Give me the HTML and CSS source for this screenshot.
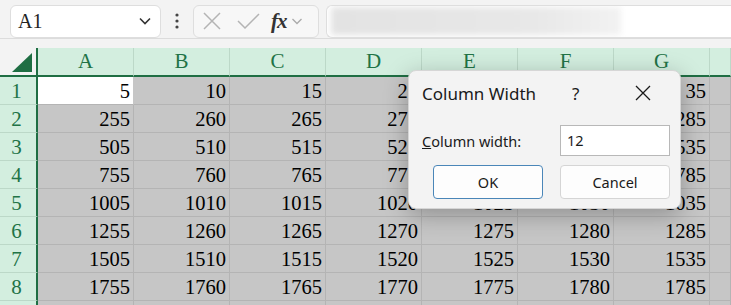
FILE: index.html
```html
<!DOCTYPE html>
<html>
<head>
<meta charset="utf-8">
<link rel="stylesheet" href="styles.css">
</head>
<body>
<div class="toolbar">
  <div class="namebox">
    <span class="nb-text">A1</span>
    <svg class="nb-chev" width="14" height="10" viewBox="0 0 14 10"><path d="M2 2.5 L7 7.5 L12 2.5" fill="none" stroke="#333" stroke-width="1.6"/></svg>
  </div>
  <div class="dots">
    <svg width="6" height="18" viewBox="0 0 6 18"><circle cx="3" cy="3" r="1.6" fill="#444"/><circle cx="3" cy="9" r="1.6" fill="#444"/><circle cx="3" cy="15" r="1.6" fill="#444"/></svg>
  </div>
  <div class="fbtns">
    <svg class="ic-x" width="20" height="20" viewBox="0 0 20 20"><path d="M2 2 L18 18 M18 2 L2 18" stroke="#b4b4b4" stroke-width="1.5" fill="none"/></svg>
    <svg class="ic-ok" width="24" height="20" viewBox="0 0 24 20"><path d="M2 10 L9 17 L23 3" stroke="#b4b4b4" stroke-width="1.5" fill="none"/></svg>
    <span class="fx">fx</span>
    <svg class="ic-chev" width="12" height="8" viewBox="0 0 12 8"><path d="M1.5 2 L6 6.5 L10.5 2" fill="none" stroke="#aaa" stroke-width="1.3"/></svg>
  </div>
  <div class="fbar"><div class="blurred"></div></div>
</div>
<div class="strip"></div>
<div class="sheet">
  <div class="corner"><div class="tri"></div></div>
  <div class="ch">A</div><div class="ch">B</div><div class="ch">C</div><div class="ch">D</div><div class="ch">E</div><div class="ch">F</div><div class="ch">G</div><div class="ch"></div>

  <div class="rh">1</div><div class="c active">5</div><div class="c">10</div><div class="c">15</div><div class="c">20</div><div class="c">25</div><div class="c">30</div><div class="c">35</div><div class="c"></div>
  <div class="rh">2</div><div class="c">255</div><div class="c">260</div><div class="c">265</div><div class="c">270</div><div class="c">275</div><div class="c">280</div><div class="c">285</div><div class="c"></div>
  <div class="rh">3</div><div class="c">505</div><div class="c">510</div><div class="c">515</div><div class="c">520</div><div class="c">525</div><div class="c">530</div><div class="c">535</div><div class="c"></div>
  <div class="rh">4</div><div class="c">755</div><div class="c">760</div><div class="c">765</div><div class="c">770</div><div class="c">775</div><div class="c">780</div><div class="c">785</div><div class="c"></div>
  <div class="rh">5</div><div class="c">1005</div><div class="c">1010</div><div class="c">1015</div><div class="c">1020</div><div class="c">1025</div><div class="c">1030</div><div class="c">1035</div><div class="c"></div>
  <div class="rh">6</div><div class="c">1255</div><div class="c">1260</div><div class="c">1265</div><div class="c">1270</div><div class="c">1275</div><div class="c">1280</div><div class="c">1285</div><div class="c"></div>
  <div class="rh">7</div><div class="c">1505</div><div class="c">1510</div><div class="c">1515</div><div class="c">1520</div><div class="c">1525</div><div class="c">1530</div><div class="c">1535</div><div class="c"></div>
  <div class="rh">8</div><div class="c">1755</div><div class="c">1760</div><div class="c">1765</div><div class="c">1770</div><div class="c">1775</div><div class="c">1780</div><div class="c">1785</div><div class="c"></div>
  <div class="rh"></div><div class="c"></div><div class="c"></div><div class="c"></div><div class="c"></div><div class="c"></div><div class="c"></div><div class="c"></div><div class="c"></div>
</div>

<div class="dialog">
  <div class="dlg-title">
    <span class="dlg-name">Column Width</span>
    <span class="dlg-help">?</span>
    <svg class="dlg-close" width="16" height="16" viewBox="0 0 16 16"><path d="M1 1 L15 15 M15 1 L1 15" stroke="#1a1a1a" stroke-width="1.3" fill="none"/></svg>
  </div>
  <div class="dlg-row">
    <span class="dlg-label"><u>C</u>olumn width:</span>
    <div class="dlg-input">12</div>
  </div>
  <div class="dlg-buttons">
    <div class="btn btn-primary">OK</div>
    <div class="btn">Cancel</div>
  </div>
</div>
</body>
</html>
```
FILE: styles.css
```css
html, body {
  margin: 0;
  padding: 0;
  width: 731px;
  height: 305px;
  overflow: hidden;
  background: #f3f3f3;
}
body {
  position: relative;
  font-family: "Liberation Serif", serif;
}
.toolbar {
  height: 39px;
  display: flex;
  align-items: center;
  background: #f3f3f3;
  border-bottom: 1px solid #dcdcdc;
  box-sizing: border-box;
  padding-top: 4px;
}
.namebox {
  margin-left: 10px;
  width: 151px;
  height: 33px;
  box-sizing: border-box;
  background: #fff;
  border: 1px solid #dedede;
  border-radius: 6px;
  display: flex;
  align-items: center;
  justify-content: space-between;
  padding: 0 8px 0 7px;
}
.nb-text {
  font-family: "Liberation Serif", serif;
  font-size: 20px;
  color: #222;
}
.dots {
  width: 32px;
  display: flex;
  justify-content: center;
  align-items: center;
}
.fbtns {
  width: 126px;
  height: 33px;
  box-sizing: border-box;
  background: #f7f7f7;
  border: 1px solid #dedede;
  border-radius: 6px;
  display: flex;
  align-items: center;
  padding-left: 8px;
}
.ic-x { margin-right: 14px; }
.ic-ok { margin-right: 11px; }
.fx {
  font-family: "Liberation Serif", serif;
  font-style: italic;
  font-weight: bold;
  font-size: 21px;
  color: #333;
  margin-right: 4px;
  letter-spacing: -1px;
}
.fbar {
  margin-left: 7px;
  flex: 1;
  height: 33px;
  box-sizing: border-box;
  background: #fff;
  border: 1px solid #dedede;
  border-right: none;
  border-radius: 6px 0 0 6px;
  display: flex;
  align-items: center;
  overflow: hidden;
}
.blurred {
  margin-left: 4px;
  width: 290px;
  height: 28px;
  background: linear-gradient(90deg, #e3e3e3, #e8e8e8 70%, #f2f2f2 100%);
  filter: blur(3px);
}
.strip {
  height: 9px;
  background: #f3f3f3;
}
.sheet {
  display: grid;
  grid-template-columns: 38px repeat(7, 96px) 1fr;
  grid-template-rows: 29px repeat(9, 28px);
  background: #c6c6c6;
}
.corner {
  background: #f3f3f3;
  border-right: 2px solid #1f6e43;
  border-bottom: 2px solid #1f6e43;
  position: relative;
}
.tri {
  position: absolute;
  right: 4px;
  bottom: 3px;
  width: 0;
  height: 0;
  border-left: 20px solid transparent;
  border-bottom: 19px solid #1f6e43;
}
.ch {
  background: #d3eedf;
  color: #217346;
  font-size: 21px;
  text-align: center;
  line-height: 27px;
  border-right: 1px solid #bcd8c8;
  border-bottom: 2px solid #1f6e43;
}
.rh {
  background: #d3eedf;
  color: #217346;
  font-size: 21px;
  text-align: center;
  line-height: 28px;
  border-right: 2px solid #1f6e43;
  border-bottom: 1px solid #bcd8c8;
  box-sizing: border-box;
  padding-right: 3px;
}
.c {
  background: #c6c6c6;
  color: #000;
  font-size: 20.5px;
  text-align: right;
  line-height: 28px;
  padding-right: 3px;
  border-right: 1px solid #b4b4b4;
  border-bottom: 1px solid #b4b4b4;
  box-sizing: border-box;
}
.c.active {
  background: #fff;
  border-right-color: #c6c6c6;
}
.dialog {
  position: absolute;
  left: 408px;
  top: 70px;
  width: 273px;
  height: 139px;
  box-sizing: border-box;
  background: #f3f3f3;
  border: 1px solid #d6d6d6;
  border-radius: 8px;
  box-shadow: 0 6px 24px rgba(0,0,0,0.28);
  font-family: "Noto Sans", sans-serif;
  color: #1a1a1a;
  padding: 0 12px 0 13px;
}
.dlg-title {
  display: flex;
  align-items: center;
  height: 44px;
}
.dlg-name {
  font-size: 17px;
}
.dlg-help {
  font-size: 17px;
  margin-left: 36px;
}
.dlg-close {
  margin-left: auto;
  margin-right: 17px;
}
.dlg-row {
  display: flex;
  align-items: center;
  justify-content: space-between;
  margin-top: 10px;
}
.dlg-label {
  font-size: 14.5px;
}
.dlg-input {
  width: 110px;
  height: 31px;
  box-sizing: border-box;
  background: #fff;
  border: 1px solid #b8b8b8;
  font-size: 14.5px;
  line-height: 29px;
  padding-left: 6px;
  margin-right: -2px;
}
.dlg-buttons {
  display: flex;
  justify-content: space-between;
  margin-top: 9px;
  padding-left: 11px;
}
.btn {
  width: 110px;
  height: 34px;
  box-sizing: border-box;
  background: #fdfdfd;
  border: 1px solid #d5d5d5;
  border-radius: 4px;
  font-size: 14.5px;
  text-align: center;
  line-height: 32px;
  margin-right: -2px;
}
.btn-primary {
  border-color: #4a86b8;
  margin-right: 0;
}
```
